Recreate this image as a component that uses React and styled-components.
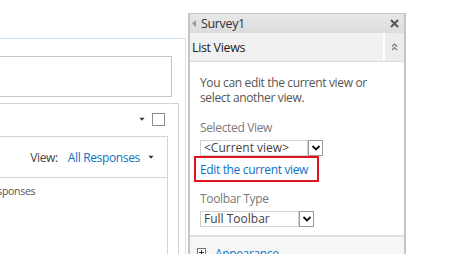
import React from 'react';
import styled, { createGlobalStyle } from 'styled-components';

const GlobalStyle = createGlobalStyle`
  html, body {
    margin: 0;
    padding: 0;
    background: #ffffff;
  }
  body {
    font-family: "Open Sans", "Noto Sans", sans-serif;
    font-size: 12px;
    letter-spacing: -0.35px;
    color: #444;
  }
`;

const Page = styled.div`
  display: flex;
  width: 474px;
  height: 254px;
  overflow: hidden;
  background: #fff;
`;

/* ---------- left: cropped list page ---------- */

const Workspace = styled.div`
  flex: none;
  width: 188px;
  padding-top: 38px;
  overflow: hidden;
  display: flex;
`;

const Canvas = styled.div`
  flex: none;
  box-sizing: border-box;
  width: 386px;
  margin-left: -200px;
  border-top: 1px solid #cfe2ee;
  border-right: 1px solid #cfe2ee;
  padding-top: 17px;
  display: flex;
  flex-direction: column;
`;

const SearchField = styled.div`
  flex: none;
  height: 39px;
  margin-right: 13px;
  border: 1px solid #c6c6c6;
  border-left: none;
`;

const ListFrame = styled.div`
  flex: 1;
  margin-top: 6px;
  margin-right: 6px;
  border: 1px solid #d4d4d4;
  border-bottom: none;
  border-left: none;
  display: flex;
  flex-direction: column;
`;

const FrameToolbar = styled.div`
  flex: none;
  height: 32px;
  box-sizing: border-box;
  padding: 0 13px 2px 0;
  display: flex;
  align-items: center;
  justify-content: flex-end;
  gap: 7px;
`;

const Tick = styled.span`
  width: 11px;
  height: 11px;
  border: 1px solid #8d8d8d;
  background: #fff;
`;

const ViewBox = styled.div`
  flex: 1;
  margin-right: 10px;
  border: 1px solid #d4d4d4;
  border-bottom: none;
  border-left: none;
  display: flex;
  flex-direction: column;
`;

const ViewBar = styled.div`
  flex: none;
  height: 40px;
  border-bottom: 1px solid #d4d4d4;
  display: flex;
  align-items: center;
  justify-content: flex-end;
  padding-right: 13px;
  font-size: 12px;
`;

const ViewLabel = styled.span`
  color: #444;
  margin-right: 10px;
`;

const ViewLink = styled.span`
  color: #0f72c4;
  margin-right: 8px;
`;

const ListRow = styled.div`
  padding: 6px 0 0 172px;
  color: #555;
  font-size: 10.5px;
  letter-spacing: -0.3px;
`;

const Caret = ({ size = 7, color = '#333' }) => (
  <svg width={size} height={size} viewBox="0 0 7 7">
    <path d="M0.5 2 L6.5 2 L3.5 5.5 Z" fill={color} />
  </svg>
);

/* ---------- right: tool pane ---------- */

const Pane = styled.div`
  flex: none;
  width: 218px;
  box-sizing: border-box;
  margin-top: 13px;
  border-top: 1px solid #c4c4c4;
  border-left: 2px solid #c6c6c6;
  border-right: 2px solid #c6c6c6;
  display: flex;
  flex-direction: column;
`;

const PaneHeader = styled.div`
  flex: none;
  height: 19px;
  background: linear-gradient(#e8e8e8, #dcdcdc);
  display: flex;
  align-items: center;
  padding: 0 5px 0 2px;
  color: #333;
  font-size: 12.5px;
`;

const PaneTitle = styled.span`
  flex: 1;
  margin-left: 5px;
`;

const SectionHead = styled.div`
  flex: none;
  height: 28px;
  display: flex;
  border-bottom: 1px solid #dadada;
  background: #f1f1f1;
`;

const SectionTitle = styled.div`
  flex: 1;
  display: flex;
  align-items: center;
  padding-left: 2px;
  color: #222;
  font-size: 12.5px;
`;

const CollapseButton = styled.div`
  width: 21px;
  border-left: 2px solid #fff;
  background: #ececec;
  display: flex;
  align-items: center;
  justify-content: center;
  box-sizing: border-box;
`;

const PaneBody = styled.div`
  flex: none;
  padding: 13px 10px 0 10px;
  display: flex;
  flex-direction: column;
  align-items: flex-start;
`;

const Note = styled.p`
  margin: 0;
  line-height: 15px;
  color: #555;
  font-size: 12px;
`;

const FieldLabel = styled.div`
  margin-top: ${p => p.$gap}px;
  line-height: 15px;
  color: #7a7a7a;
  font-size: 12px;
`;

const Select = styled.div`
  margin-top: ${p => p.$gap}px;
  display: flex;
  align-items: center;
  height: 16px;
`;

const SelectValue = styled.div`
  box-sizing: border-box;
  width: ${p => p.$width}px;
  height: 16px;
  border: 1px solid #d0d0d0;
  padding-left: 3px;
  line-height: 13px;
  color: #444;
  font-size: 12px;
  letter-spacing: 0;
  white-space: nowrap;
`;

const SelectArrow = styled.div`
  box-sizing: border-box;
  width: 15px;
  height: 16px;
  border: 1px solid #9a9a9a;
  background: #fff;
  display: flex;
  align-items: center;
  justify-content: center;
`;

const Highlight = styled.div`
  box-sizing: border-box;
  margin-left: -6px;
  width: 125px;
  height: 26px;
  border: 2px solid #e0141f;
  padding-left: 4px;
  display: flex;
  align-items: center;
`;

const Link = styled.a`
  color: #0f72c4;
  text-decoration: none;
  font-size: 12px;
`;

const AppearanceRow = styled.div`
  flex: none;
  margin-top: 8px;
  border-top: 2px solid #e0e0e0;
  background: #f6f6f6;
  height: 30px;
  display: flex;
  align-items: flex-start;
  padding: 8px 0 0 7px;
  gap: 9px;
`;

const PlusBox = styled.span`
  width: 7px;
  height: 7px;
  margin-top: 3px;
  border: 1px solid #777;
  background: #fff;
  display: flex;
  align-items: center;
  justify-content: center;
`;

const Chevron = () => (
  <svg width="10" height="8" viewBox="0 0 10 8">
    <path d="M1.5 2 L5 5.5 L8.5 2" fill="none" stroke="#111" strokeWidth="1.8" />
  </svg>
);

const SelectBox = ({ value, width, gap = 6 }) => (
  <Select $gap={gap}>
    <SelectValue $width={width}>{value}</SelectValue>
    <SelectArrow><Chevron /></SelectArrow>
  </Select>
);

const App = () => (
  <Page>
    <GlobalStyle />
    <Workspace>
      <Canvas>
        <SearchField />
        <ListFrame>
          <FrameToolbar>
            <Caret size={6} />
            <Tick />
          </FrameToolbar>
          <ViewBox>
            <ViewBar>
              <ViewLabel>View:</ViewLabel>
              <ViewLink>All Responses</ViewLink>
              <Caret size={6} />
            </ViewBar>
            <ListRow>All Responses</ListRow>
          </ViewBox>
        </ListFrame>
      </Canvas>
    </Workspace>

    <Pane>
      <PaneHeader>
        <svg width="4" height="7" viewBox="0 0 4 7">
          <path d="M4 0 L0 3.5 L4 7 Z" fill="#999" />
        </svg>
        <PaneTitle>Survey1</PaneTitle>
        <svg width="9" height="9" viewBox="0 0 9 9">
          <path d="M1 1 L8 8 M8 1 L1 8" stroke="#555" strokeWidth="2" />
        </svg>
      </PaneHeader>
      <SectionHead>
        <SectionTitle>List Views</SectionTitle>
        <CollapseButton>
          <svg width="7" height="8" viewBox="0 0 7 8">
            <path d="M1 3.5 L3.5 1 L6 3.5 M1 7 L3.5 4.5 L6 7" fill="none" stroke="#777" strokeWidth="1.1" />
          </svg>
        </CollapseButton>
      </SectionHead>
      <PaneBody>
        <Note>You can edit the current view or<br />select another view.</Note>
        <FieldLabel $gap={15}>Selected View</FieldLabel>
        <SelectBox value="<Current view>" width={108} gap={5} />
        <Highlight>
          <Link href="#">Edit the current view</Link>
        </Highlight>
        <FieldLabel $gap={9}>Toolbar Type</FieldLabel>
        <SelectBox value="Full Toolbar" width={99} gap={5} />
      </PaneBody>
      <AppearanceRow>
        <PlusBox>
          <svg width="5" height="5" viewBox="0 0 5 5">
            <path d="M0 2.5 H5 M2.5 0 V5" stroke="#333" strokeWidth="1" />
          </svg>
        </PlusBox>
        <Link href="#">Appearance</Link>
      </AppearanceRow>
    </Pane>
  </Page>
);

export default App;
